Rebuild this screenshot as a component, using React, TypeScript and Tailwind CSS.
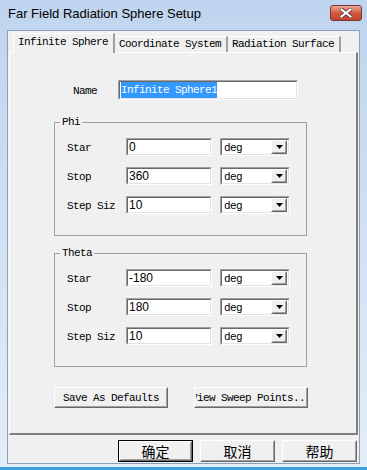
import React from 'react';

// SimSun-like: 6px advance, taller glyphs
const mono = { fontFamily: '"Liberation Mono", "DejaVu Sans Mono", monospace', fontSize: '11px', letterSpacing: '-0.6px' };

const Sunken: React.FC<{ className?: string; children?: React.ReactNode }> = ({ className = '', children }) => (
  <div
    className={`border border-t-[#a0a0a0] border-l-[#a0a0a0] border-b-[#ffffff] border-r-[#ffffff] ${className}`}
  >
    <div className="h-full w-full bg-white border border-t-[#696969] border-l-[#696969] border-b-[#e3e3e3] border-r-[#e3e3e3] flex items-center overflow-hidden">
      {children}
    </div>
  </div>
);

const Raised: React.FC<{ className?: string; children?: React.ReactNode }> = ({ className = '', children }) => (
  <div
    className={`border border-t-[#ffffff] border-l-[#ffffff] border-b-[#696969] border-r-[#696969] bg-[#f0f0f0] ${className}`}
  >
    <div className="h-full w-full border border-t-[#f0f0f0] border-l-[#f0f0f0] border-b-[#a0a0a0] border-r-[#a0a0a0] flex items-center justify-center overflow-hidden">
      {children}
    </div>
  </div>
);

const UnitSelect: React.FC = () => (
  <Sunken className="w-[70px] h-[18px]">
    <span className="flex-1 pl-[2px] pt-[2px] text-black" style={mono}>
      deg
    </span>
    <Raised className="w-[16px] h-[14px] mr-[1px]">
      <svg width="7" height="4" viewBox="0 0 7 4">
        <path d="M0 0h7L3.5 4z" fill="#000" />
      </svg>
    </Raised>
  </Sunken>
);

const Row: React.FC<{ label: string; value: string }> = ({ label, value }) => (
  <div className="flex items-center h-[18px]">
    <span className="w-[59px] text-black pt-[2px]" style={mono}>
      {label}
    </span>
    <Sunken className="w-[86px] h-[18px]">
      <span className="pl-[1px] text-[12px] text-black" style={{ fontFamily: '"Liberation Sans", Arial, sans-serif' }}>
        {value}
      </span>
    </Sunken>
    <div className="ml-[8px]">
      <UnitSelect />
    </div>
  </div>
);

const Group: React.FC<{ title: string; rows: [string, string][]; className?: string }> = ({ title, rows, className = '' }) => (
  <div className={`relative w-[253px] h-[114px] border border-[#a0a0a0] ${className}`}>
    <span className="absolute left-[5px] -top-[8px] px-[2px] bg-[#f0f0f0] text-black leading-[14px]" style={mono}>
      {title}
    </span>
    <div className="flex flex-col gap-[11px] pl-[12px] pt-[15px]">
      {rows.map(([l, v]) => (
        <Row key={l} label={l} value={v} />
      ))}
    </div>
  </div>
);

const cjk = { fontFamily: '"Noto Sans CJK SC", sans-serif' };

const App: React.FC = () => {
  return (
    <div className="w-[367px] h-[470px] flex flex-col bg-gradient-to-b from-[#bfd4ee] to-[#e4edf8] border-b-[3px] border-b-[#3aa3dc] overflow-hidden">
      {/* title bar */}
      <div className="h-[30px] flex items-start justify-between pl-[8px] pr-[5px] pt-[5px]">
        <span className="text-[13px] text-black leading-[18px]" style={{ fontFamily: '"Liberation Sans", Arial, sans-serif' }}>
          Far Field Radiation Sphere Setup
        </span>
        <div className="w-[32px] h-[16px] rounded-[3px] border border-[#7a3434] bg-gradient-to-b from-[#e8a89a] via-[#d0593f] to-[#c2432c] flex items-center justify-center">
          <svg width="12" height="10" viewBox="0 0 12 10">
            <path d="M1.5 1.5L10.5 8.5M10.5 1.5L1.5 8.5" stroke="#5a2a2a" strokeWidth="3.6" strokeLinecap="square" />
            <path d="M1.5 1.5L10.5 8.5M10.5 1.5L1.5 8.5" stroke="#ffffff" strokeWidth="2.2" strokeLinecap="square" />
          </svg>
        </div>
      </div>

      {/* client area */}
      <div className="flex-1 mx-[7px] mb-[3px] bg-[#f0f0f0] border border-[#8aa0bc] flex flex-col">
        {/* tabs */}
        <div className="flex items-end pl-[5px] pt-[1px] h-[21px]">
          <div className="relative z-10 h-[20px] -mb-[1px] pl-[4px] pr-[5px] bg-[#f0f0f0] border-t border-l border-t-white border-l-white border-r-2 border-r-[#a0a0a0] flex items-center">
            <span className="text-black pb-[2px]" style={mono}>
              Infinite Sphere
            </span>
          </div>
          <div className="h-[16px] pl-[4px] pr-[5px] border-t border-t-white border-r-2 border-r-[#a0a0a0] flex items-center">
            <span className="text-black" style={mono}>
              Coordinate System
            </span>
          </div>
          <div className="h-[16px] pl-[4px] pr-[5px] border-t border-t-white border-r-2 border-r-[#a0a0a0] flex items-center">
            <span className="text-black" style={mono}>
              Radiation Surface
            </span>
          </div>
        </div>

        {/* tab panel */}
        <div className="ml-[1px] w-[349px] h-[383px] border-t border-l border-t-white border-l-white border-r-2 border-b-2 border-r-[#808080] border-b-[#808080] flex flex-col">
          <div className="flex items-center mt-[27px]">
            <span className="ml-[63px] w-[45px] text-black pt-[2px]" style={mono}>
              Name
            </span>
            <Sunken className="w-[180px] h-[20px]">
              <span className="ml-[1px] bg-[#3399ff] text-white leading-[15px] pt-[1px]" style={mono}>
                Infinite Sphere1
              </span>
            </Sunken>
          </div>

          <Group
            className="ml-[44px] mt-[22px]"
            title="Phi"
            rows={[
              ['Star', '0'],
              ['Stop', '360'],
              ['Step Siz', '10'],
            ]}
          />
          <Group
            className="ml-[44px] mt-[17px]"
            title="Theta"
            rows={[
              ['Star', '-180'],
              ['Stop', '180'],
              ['Step Siz', '10'],
            ]}
          />

          <div className="flex ml-[44px] mt-[20px] gap-[26px]">
            <Raised className="w-[114px] h-[21px]">
              <span className="text-black pt-[1px]" style={mono}>
                Save As Defaults
              </span>
            </Raised>
            <Raised className="w-[114px] h-[21px]">
              <span className="text-black pt-[1px] whitespace-nowrap" style={mono}>
                View Sweep Points...
              </span>
            </Raised>
          </div>
        </div>

        {/* dialog buttons */}
        <div className="flex justify-end gap-[7px] pr-[2px] mt-[5px]">
          <div className="border border-black">
            <Raised className="w-[73px] h-[20px]">
              <span className="text-[14px] text-black leading-none" style={cjk}>
                确定
              </span>
            </Raised>
          </div>
          <Raised className="w-[75px] h-[22px]">
            <span className="text-[14px] text-black leading-none" style={cjk}>
              取消
            </span>
          </Raised>
          <Raised className="w-[75px] h-[22px]">
            <span className="text-[14px] text-black leading-none" style={cjk}>
              帮助
            </span>
          </Raised>
        </div>
      </div>
    </div>
  );
};

export default App;
